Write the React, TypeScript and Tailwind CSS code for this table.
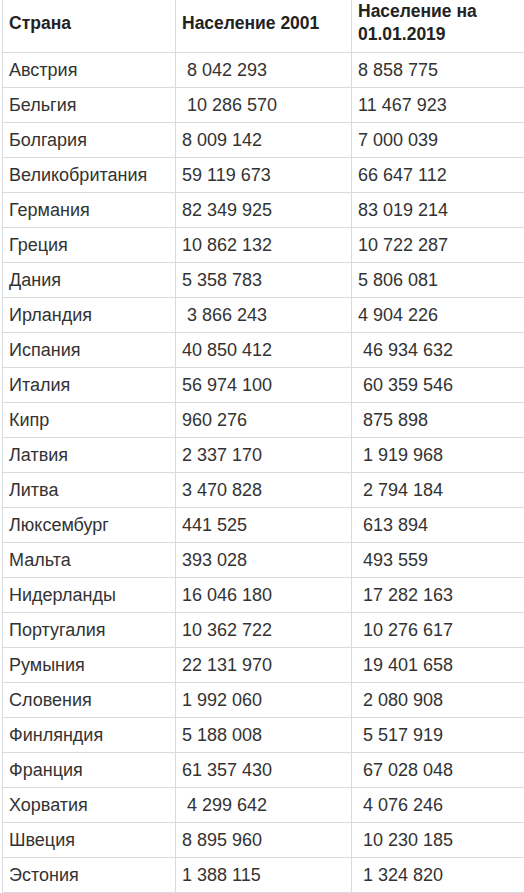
const rows: [string, string, string][] = [
  ["Австрия", " 8 042 293", "8 858 775"],
  ["Бельгия", " 10 286 570", "11 467 923"],
  ["Болгария", "8 009 142", "7 000 039"],
  ["Великобритания", "59 119 673", "66 647 112"],
  ["Германия", "82 349 925", "83 019 214"],
  ["Греция", "10 862 132", "10 722 287"],
  ["Дания", "5 358 783", "5 806 081"],
  ["Ирландия", " 3 866 243", "4 904 226"],
  ["Испания", "40 850 412", " 46 934 632"],
  ["Италия", "56 974 100", " 60 359 546"],
  ["Кипр", "960 276", " 875 898"],
  ["Латвия", "2 337 170", " 1 919 968"],
  ["Литва", "3 470 828", " 2 794 184"],
  ["Люксембург", "441 525", " 613 894"],
  ["Мальта", "393 028", " 493 559"],
  ["Нидерланды", "16 046 180", " 17 282 163"],
  ["Португалия", "10 362 722", " 10 276 617"],
  ["Румыния", "22 131 970", " 19 401 658"],
  ["Словения", "1 992 060", " 2 080 908"],
  ["Финляндия", "5 188 008", " 5 517 919"],
  ["Франция", "61 357 430", " 67 028 048"],
  ["Хорватия", " 4 299 642", " 4 076 246"],
  ["Швеция", "8 895 960", " 10 230 185"],
  ["Эстония", "1 388 115", " 1 324 820"],
];

const cell = "flex items-center h-[35px] px-[6px] border-b border-r border-[#d7dade] whitespace-pre";
const head = "flex items-center h-[53px] pb-[6px] px-[6px] border-b border-r border-[#d7dade] font-bold text-[17.5px] text-[#222] leading-[23px]";

export default function App() {
  return (
    <div className="w-[524px] h-[893px] overflow-hidden bg-white pl-[2px]">
      <div
        className="grid grid-cols-[174px_176px_200px] w-[550px] text-[18px] text-[#333] leading-[23px]"
        style={{ fontFamily: '"Liberation Sans", Arial, sans-serif' }}
      >
        <div className={`${head} border-l`}>Страна</div>
        <div className={head}>Население 2001</div>
        <div className={head}>
          Население на
          <br />
          01.01.2019
        </div>
        {rows.map(([country, a, b]) => (
          <div key={country} className="contents">
            <div className={`${cell} border-l`}>{country}</div>
            <div className={cell}>{a}</div>
            <div className={cell}>{b}</div>
          </div>
        ))}
      </div>
    </div>
  );
}
